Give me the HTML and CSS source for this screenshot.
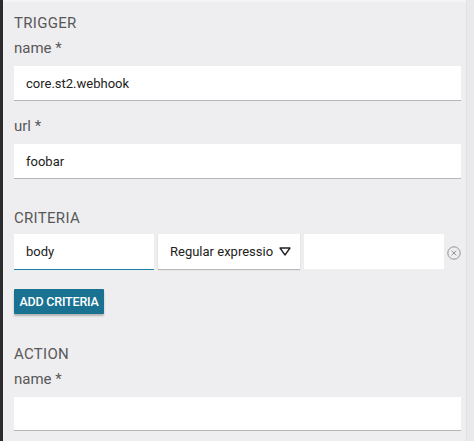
FILE: index.html
```html
<!DOCTYPE html>
<html>
<head>
<meta charset="utf-8">
<link rel="stylesheet" href="styles.css">
</head>
<body>
<div class="frame">
  <div class="edge"></div>
  <div class="panel">
    <div class="section-title">TRIGGER</div>
    <div class="label">name *</div>
    <div class="input">core.st2.webhook</div>
    <div class="label">url *</div>
    <div class="input">foobar</div>
    <div class="section-title criteria-title">CRITERIA</div>
    <div class="criteria-row">
      <div class="cinput active">body</div>
      <div class="cselect"><span class="sel-text">Regular expressio</span><svg class="tri" width="12" height="9" viewBox="0 0 12 9"><path d="M1 1 H11 L6 8 Z" fill="none" stroke="#222" stroke-width="1.3" stroke-linejoin="round"/></svg></div>
      <div class="cinput plain"></div>
      <svg class="remove" width="14" height="14" viewBox="0 0 14 14"><circle cx="7" cy="7" r="6.2" fill="none" stroke="#8a8a8a" stroke-width="0.9"/><path d="M4.6 4.6 L9.4 9.4 M9.4 4.6 L4.6 9.4" stroke="#8a8a8a" stroke-width="0.9"/></svg>
    </div>
    <button class="btn">ADD CRITERIA</button>
    <div class="section-title action-title">ACTION</div>
    <div class="label">name *</div>
    <div class="input"></div>
  </div>
  <div class="rail"></div>
</div>
</body>
</html>
```
FILE: styles.css
```css
html, body {
  margin: 0;
  padding: 0;
  background: #eeeef0;
  font-family: Roboto, "Liberation Sans", sans-serif;
}
.frame {
  display: flex;
  width: 474px;
  height: 441px;
  overflow: hidden;
}
.edge {
  width: 3px;
  background: #2c2c2e;
  flex: none;
}
.panel {
  flex: 1;
  background: #eeeef0;
  border-top: 2px solid #f4f4f6;
  padding: 11px 5px 0 11px;
  display: flex;
  flex-direction: column;
}
.rail {
  width: 8px;
  flex: none;
  background: #e9e9eb;
  border-left: 1px solid #e2e2e4;
}
.section-title {
  font-size: 15px;
  line-height: 20px;
  color: #585858;
  letter-spacing: 0.3px;
}
.criteria-title { margin-top: 19px; }
.action-title { margin-top: 30px; }
.label {
  font-size: 15px;
  line-height: 18px;
  color: #585858;
  margin-top: 6px;
}
.input {
  margin-top: 9px;
  height: 34px;
  background: #fff;
  border-bottom: 1px solid #b5b5b7;
  font-size: 13px;
  line-height: 35px;
  color: #222;
  padding-left: 12px;
  margin-bottom: 10px;
}
.criteria-row {
  margin-top: 6px;
  display: flex;
  align-items: flex-start;
}
.cinput {
  width: 128px;
  height: 35px;
  background: #fff;
  font-size: 13px;
  line-height: 36px;
  color: #222;
  padding-left: 12px;
}
.cinput.active {
  height: 35px;
  line-height: 36px;
  border-bottom: 1px solid #1d7fa5;
}
.cinput.plain {
  width: 140px;
  padding-left: 0;
  height: 35px;
  margin-left: 4px;
}
.cselect {
  margin-left: 4px;
  width: 130px;
  height: 35px;
  background: #fff;
  box-shadow: 0 1px 1px rgba(0,0,0,0.22);
  padding-left: 12px;
  display: flex;
  align-items: center;
  font-size: 13px;
  color: #222;
}
.sel-text { white-space: nowrap; }
.tri { margin-left: 6px; }
.remove { margin-left: 3px; margin-top: 12px; }
.btn {
  align-self: flex-start;
  margin-top: 19px;
  height: 26px;
  width: 90px;
  padding: 0;
  border: none;
  background: #1a7293;
  color: #fff;
  font-family: Roboto, "Liberation Sans", sans-serif;
  font-size: 12.5px;
  font-weight: 500;
  letter-spacing: -0.2px;
  box-shadow: 0 2px 2px rgba(0,0,0,0.25);
  border-radius: 1px;
}
```
